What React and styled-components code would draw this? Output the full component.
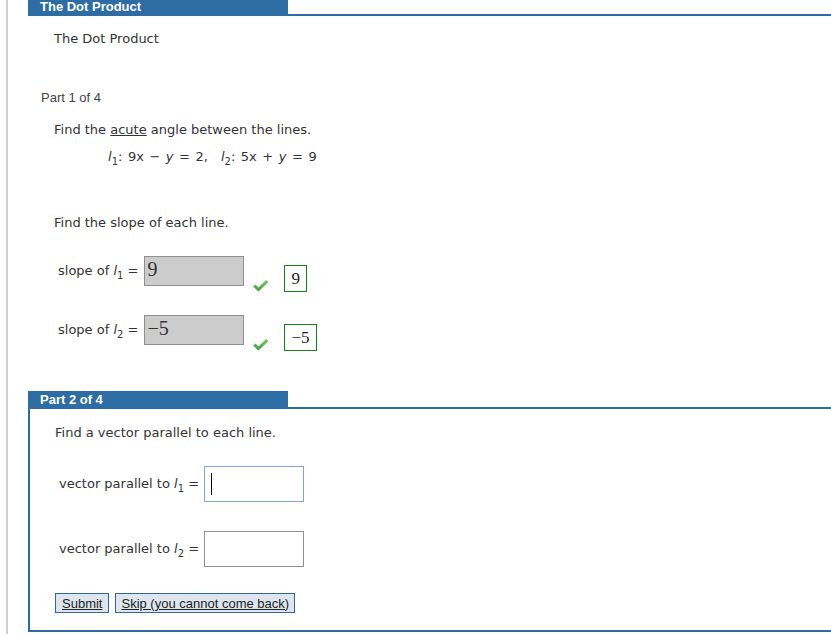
import React from 'react'
import styled, {createGlobalStyle} from 'styled-components'

const GlobalStyle = createGlobalStyle`
  html, body {
    margin: 0;
    padding: 0;
    background: #fff;
  }
  body {
    font-family: "DejaVu Sans", Verdana, sans-serif;
    font-size: 13px;
    color: #333;
  }
`

const Page = styled.div`
  margin-left: 6px;
  margin-top: -2px;
  min-height: 640px;
  border-left: 2px solid #cfcfcf;
  padding-left: 20px;
`

const Section = styled.div`
  border-left: ${p => (p.$boxed ? '2px solid #2e6da4' : '0')};
  border-bottom: ${p => (p.$boxed ? '2px solid #2e6da4' : '0')};
  margin-top: ${p => p.$top || 0}px;
  padding-bottom: ${p => p.$bottom || 0}px;
`

const Header = styled.div`
  display: flex;
  align-items: flex-end;
  margin-left: ${p => (p.$boxed ? '-2px' : '0')};
`

const Tab = styled.div`
  width: 248px;
  height: 18px;
  padding-left: 12px;
  background: #2e6da4;
  color: #fff;
  font-family: "Liberation Sans", Arial, sans-serif;
  font-weight: bold;
  font-size: 13px;
  line-height: 17px;
`

const Rule = styled.div`
  flex: 1;
  border-bottom: 2px solid #2e6da4;
`

const Text = styled.div`
  margin-top: ${p => p.$top || 0}px;
  margin-left: ${p => p.$left || 0}px;
  line-height: 16px;
`

const PartTitle = styled.div`
  margin-top: ${p => p.$top || 0}px;
  margin-left: 13px;
  font-family: "Liberation Sans", Arial, sans-serif;
  font-size: 13px;
  line-height: 16px;
  color: #444;
`

const Underline = styled.span`
  text-decoration: underline;
`

const Var = styled.i`
  font-style: italic;
`

const Sub = styled.sub`
  font-size: 10px;
  vertical-align: -4px;
  line-height: 0;
`

const Equation = styled.div`
  margin-top: ${p => p.$top || 0}px;
  margin-left: 80px;
  line-height: 16px;
  word-spacing: 1.4px;
  span + span {
    margin-left: 13px;
  }
`

const Row = styled.div`
  display: flex;
  align-items: flex-start;
  margin-top: ${p => p.$top || 0}px;
  margin-left: ${p => p.$left || 0}px;
`

const Label = styled.div`
  margin-top: ${p => p.$top || 7}px;
  margin-right: ${p => p.$gap || 5}px;
  line-height: 16px;
  white-space: nowrap;
`

const FilledBox = styled.div`
  box-sizing: border-box;
  width: 100px;
  height: 30px;
  background: #cccccc;
  border: 1px solid #8f8f8f;
  padding: 0 2px;
  font-family: "Liberation Serif", "Times New Roman", serif;
  font-size: 20px;
  line-height: 24px;
  color: #333;
`

const Check = styled.svg`
  margin-left: 8px;
  margin-top: ${p => p.$top || 0}px;
`

const Answer = styled.div`
  box-sizing: border-box;
  margin-left: 15px;
  margin-top: ${p => p.$top || 0}px;
  height: 27px;
  padding: 0 6px;
  border: 1px solid #1a7f1a;
  font-family: "Liberation Serif", "Times New Roman", serif;
  font-size: 17px;
  line-height: 25px;
  color: #222;
`

const EntryBox = styled.div`
  box-sizing: border-box;
  width: 100px;
  height: 36px;
  border: 1px solid ${p => (p.$focus ? '#7ea6d3' : '#8f8f8f')};
  background: #fff;
  padding: 6px 0 0 6px;
`

const Caret = styled.div`
  width: 1px;
  height: 22px;
  background: #000;
`

const Buttons = styled.div`
  display: flex;
  gap: 6px;
  margin-top: ${p => p.$top || 0}px;
  margin-left: 25px;
`

const Button = styled.button`
  box-sizing: border-box;
  height: 20px;
  padding: 0 ${p => p.$pad || 5}px;
  background: #dde6ef;
  border: 1px solid #336699;
  border-radius: 0;
  font-family: "Liberation Sans", Arial, sans-serif;
  font-size: 13px;
  line-height: 17px;
  color: #222;
  text-decoration: underline;
  cursor: pointer;
`

const CheckMark = ({top}) => (
  <Check $top={top} width="17" height="13" viewBox="0 0 17 13">
    <defs>
      <linearGradient id="ck" x1="0" y1="0" x2="0" y2="1">
        <stop offset="0" stopColor="#7ccc6c" />
        <stop offset="1" stopColor="#3e9a3e" />
      </linearGradient>
    </defs>
    <path d="M1 7.5 L3.5 5.5 L6.5 8.5 L14 1 L16.5 3 L6.5 12.5 Z" fill="url(#ck)" />
  </Check>
)

const L = ({n}) => (
  <>
    <Var>l</Var><Sub>{n}</Sub>
  </>
)

export default function App() {
  return (
    <>
      <GlobalStyle />
      <Page>
        <Section>
          <Header>
            <Tab>The Dot Product</Tab>
            <Rule />
          </Header>
          <Text $top={15} $left={26}>The Dot Product</Text>

          <PartTitle $top={43}>Part 1 of 4</PartTitle>
          <Text $top={16} $left={26}>
            Find the <Underline>acute</Underline> angle between the lines.
          </Text>
          <Equation $top={11}>
            <span><L n={1} />: 9x − <Var>y</Var> = 2,</span>
            <span><L n={2} />: 5x + <Var>y</Var> = 9</span>
          </Equation>

          <Text $top={50} $left={26}>Find the slope of each line.</Text>

          <Row $top={25} $left={30}>
            <Label $gap={6}>slope of <L n={1} /> =</Label>
            <FilledBox>9</FilledBox>
            <CheckMark top={23} />
            <Answer $top={9}>9</Answer>
          </Row>
          <Row $top={23} $left={30}>
            <Label $gap={6}>slope of <L n={2} /> =</Label>
            <FilledBox>−5</FilledBox>
            <CheckMark top={23} />
            <Answer $top={9}>−5</Answer>
          </Row>
        </Section>

        <Section $boxed $top={40} $bottom={17}>
          <Header $boxed>
            <Tab>Part 2 of 4</Tab>
            <Rule />
          </Header>
          <Text $top={16} $left={25}>Find a vector parallel to each line.</Text>

          <Row $top={25} $left={29}>
            <Label $top={10} $gap={5}>vector parallel to <L n={1} /> =</Label>
            <EntryBox $focus><Caret /></EntryBox>
          </Row>
          <Row $top={29} $left={29}>
            <Label $top={10} $gap={5}>vector parallel to <L n={2} /> =</Label>
            <EntryBox />
          </Row>

          <Buttons $top={26}>
            <Button $pad={6}>Submit</Button>
            <Button $pad={5}>Skip (you cannot come back)</Button>
          </Buttons>
        </Section>
      </Page>
    </>
  )
}
